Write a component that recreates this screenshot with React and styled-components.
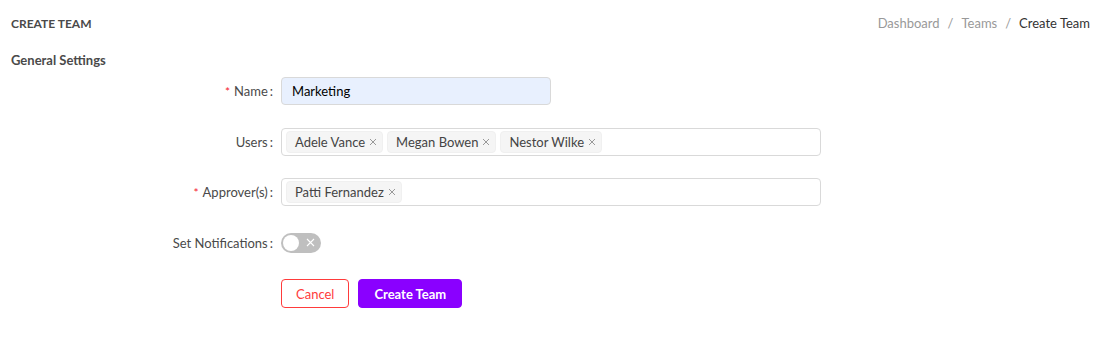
import React from 'react';
import styled, { createGlobalStyle } from 'styled-components';

const GlobalStyle = createGlobalStyle`
  body {
    margin: 0;
    background: #fff;
    font-family: 'Lato', 'Open Sans', sans-serif;
    color: #444;
  }
`;

const Page = styled.div`
  padding: 15px 10px 0 11px;
`;

const Header = styled.div`
  display: flex;
  justify-content: space-between;
  align-items: center;
  height: 16px;
`;

const Title = styled.h1`
  margin: 0;
  font-size: 12px;
  font-weight: 700;
  color: #4a4a4a;
  text-transform: uppercase;
`;

const Crumbs = styled.nav`
  display: flex;
  align-items: center;
  gap: 8px;
  font-size: 13px;
  color: #999;
`;

const Crumb = styled.span`
  color: ${(p) => (p.$active ? '#333' : '#999')};
`;

const Section = styled.h2`
  margin: 21px 0 0;
  font-size: 13px;
  font-weight: 700;
  color: #4a4a4a;
  line-height: 16px;
`;

const Form = styled.form`
  display: flex;
  flex-direction: column;
  gap: 22.5px;
  margin-top: 9px;
`;

const Row = styled.div`
  display: flex;
  align-items: center;
  min-height: 28px;
`;

const Label = styled.label`
  width: 262px;
  margin-right: 8px;
  text-align: right;
  font-size: 13px;
  color: #4a4a4a;
  white-space: nowrap;
  &::after {
    content: ':';
    margin-left: 2px;
  }
`;

const Req = styled.span`
  color: #f5222d;
  margin-right: 4px;
  font-size: 12px;
`;

const Input = styled.input`
  box-sizing: border-box;
  width: 270px;
  height: 28px;
  padding: 0 10px;
  border: 1px solid #d9d9d9;
  border-radius: 4px;
  background: #e8f0fe;
  font-family: inherit;
  font-size: 13px;
  color: #000;
  outline: none;
`;

const Select = styled.div`
  box-sizing: border-box;
  width: 540px;
  height: 28px;
  padding: 0 4px;
  border: 1px solid #d9d9d9;
  border-radius: 4px;
  display: flex;
  align-items: center;
  gap: 4px;
`;

const Tag = styled.span`
  display: inline-flex;
  align-items: center;
  gap: 4px;
  height: 20px;
  padding: 0 5px 0 8px;
  background: #f5f5f5;
  border: 1px solid #f0f0f0;
  border-radius: 4px;
  font-size: 13px;
  color: #444;
`;

const Close = () => (
  <svg width="8" height="8" viewBox="0 0 8 8">
    <path d="M1 1L7 7M7 1L1 7" stroke="#999" strokeWidth="1" />
  </svg>
);

const Switch = styled.span`
  box-sizing: border-box;
  width: 40px;
  height: 20px;
  border-radius: 10px;
  background: #bfbfbf;
  display: flex;
  align-items: center;
  padding: 2px;
  gap: 7px;
`;

const Knob = styled.span`
  width: 16px;
  height: 16px;
  border-radius: 50%;
  background: #fff;
`;

const SwitchX = () => (
  <svg width="9" height="9" viewBox="0 0 9 9">
    <path d="M1 1L8 8M8 1L1 8" stroke="#fff" strokeWidth="1.1" />
  </svg>
);

const Actions = styled.div`
  display: flex;
  gap: 9px;
  margin-left: 270px;
`;

const Button = styled.button`
  box-sizing: border-box;
  height: 29px;
  padding: 0 ${(p) => (p.$primary ? '15px' : '14px')};
  border-radius: 4px;
  font-family: inherit;
  font-size: 13px;
  font-weight: ${(p) => (p.$primary ? 700 : 400)};
  border: 1px solid ${(p) => (p.$primary ? '#8a00ff' : '#ff3b3b')};
  background: ${(p) => (p.$primary ? '#8a00ff' : '#fff')};
  color: ${(p) => (p.$primary ? '#fff' : '#ff3b3b')};
  cursor: pointer;
`;

const users = ['Adele Vance', 'Megan Bowen', 'Nestor Wilke'];
const approvers = ['Patti Fernandez'];

const App = () => {
  return (
    <>
      <GlobalStyle />
      <Page>
        <Header>
          <Title>Create Team</Title>
          <Crumbs>
            <Crumb>Dashboard</Crumb>
            <span>/</span>
            <Crumb>Teams</Crumb>
            <span>/</span>
            <Crumb $active>Create Team</Crumb>
          </Crumbs>
        </Header>
        <Section>General Settings</Section>
        <Form onSubmit={(e) => e.preventDefault()}>
          <Row>
            <Label><Req>*</Req>Name</Label>
            <Input defaultValue="Marketing" />
          </Row>
          <Row>
            <Label>Users</Label>
            <Select>
              {users.map((u) => (
                <Tag key={u}>{u}<Close /></Tag>
              ))}
            </Select>
          </Row>
          <Row>
            <Label><Req>*</Req>Approver(s)</Label>
            <Select>
              {approvers.map((u) => (
                <Tag key={u}>{u}<Close /></Tag>
              ))}
            </Select>
          </Row>
          <Row>
            <Label>Set Notifications</Label>
            <Switch><Knob /><SwitchX /></Switch>
          </Row>
          <Actions>
            <Button type="button">Cancel</Button>
            <Button type="submit" $primary>Create Team</Button>
          </Actions>
        </Form>
      </Page>
    </>
  );
};

export default App;
